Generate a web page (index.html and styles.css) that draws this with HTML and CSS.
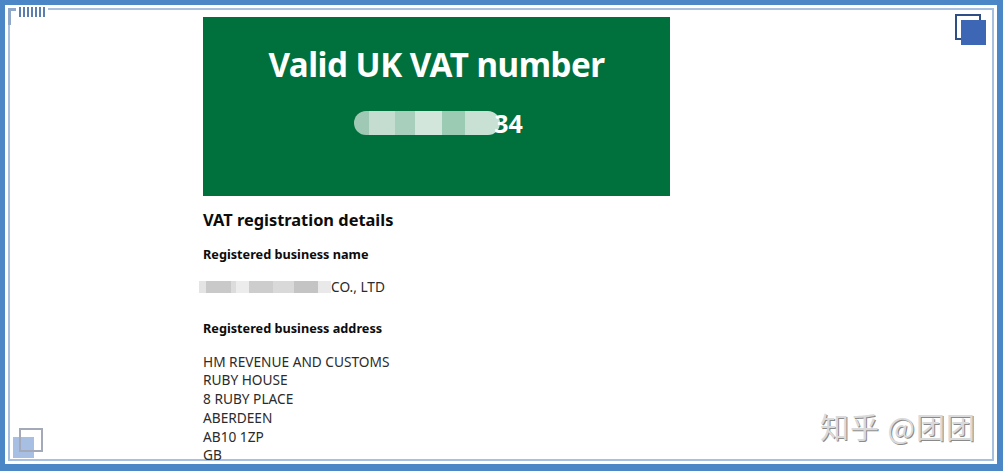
FILE: index.html
```html
<!DOCTYPE html>
<html lang="en">
<head>
  <meta charset="UTF-8">
  <title>Check a UK VAT number</title>
  <meta name="viewport" content="width=device-width, initial-scale=1">
  <link rel="stylesheet" href="styles.css">
</head>
<body>

<div class="frame">
  <div class="inner">

    <!-- decorations of the screenshot frame -->
    <div class="corner-tl"></div>
    <div class="hatch"><i></i><i></i><i></i><i></i><i></i><i></i><i></i></div>
    <div class="squares-tr"><span class="sq-line"></span><span class="sq-fill"></span></div>
    <div class="squares-bl"><span class="sq-fill"></span><span class="sq-line"></span></div>

    <main class="content">
      <div class="panel">
        <h1 class="panel-title">Valid UK VAT number</h1>
        <div class="panel-body"><span class="blur-pill"></span>34</div>
      </div>

      <h2 class="section-title">VAT registration details</h2>

      <h3 class="label">Registered business name</h3>
      <p class="value"><span class="blur-name"></span>CO., LTD</p>

      <h3 class="label">Registered business address</h3>
      <p class="value address">
        HM REVENUE AND CUSTOMS<br>
        RUBY HOUSE<br>
        8 RUBY PLACE<br>
        ABERDEEN<br>
        AB10 1ZP<br>
        GB
      </p>
    </main>

    <div class="watermark">知乎 @团团</div>
  </div>
</div>

</body>
</html>
```

FILE: styles.css
```css
body {
  margin: 0;
  font-family: 'Noto Sans', 'Liberation Sans', sans-serif;
  color: #0b0c0c;
  background: white;
}
.frame {
  width: 1003px;
  height: 471px;
  box-sizing: border-box;
  border: 5px solid #4b86c7;
  border-right-width: 6px;
  border-bottom-width: 7px;
  padding: 3px;
  background: white;
  overflow: hidden;
}
.inner {
  position: relative;
  height: 100%;
  box-sizing: border-box;
  border: 2px solid #a8c0df;
}
.content {
  padding: 7px 0 0 193px;
}
.panel {
  width: 467px;
  height: 179px;
  box-sizing: border-box;
  background: #00703c;
  color: white;
  text-align: center;
  padding-top: 26px;
}
.panel-title {
  margin: 0;
  font-size: 33.2px;
  font-weight: 700;
  line-height: 44px;
  letter-spacing: -0.5px;
}
.panel-body {
  margin-top: 21px;
  font-size: 25px;
  font-weight: 700;
  line-height: 30px;
  display: flex;
  justify-content: center;
  align-items: center;
  padding-left: 4px;
}
.blur-pill {
  display: inline-block;
  width: 146px;
  height: 24px;
  border-radius: 12px;
  margin-right: -6px;
  background:
    linear-gradient(90deg, #9fc9b4 0 10%, #c4ddd0 10% 28%, #a8cfbc 28% 42%, #d3e6dc 42% 60%, #9ccbb3 60% 76%, #c9e0d4 76% 100%);
}
.section-title {
  margin: 13px 0 0;
  font-size: 16.4px;
  font-weight: 700;
  line-height: 22px;
}
.label {
  margin: 14px 0 0;
  font-size: 12.7px;
  font-weight: 700;
  line-height: 18px;
}
.value {
  margin: 15px 0 0;
  font-size: 13.7px;
  line-height: 18.7px;
  color: #2b2b2b;
}
.value + .label {
  margin-top: 22px;
}
.address {
  margin-top: 16px;
}
.blur-name {
  display: inline-block;
  width: 132px;
  height: 12px;
  margin-left: -4px;
  vertical-align: -1px;
  background:
    linear-gradient(90deg, #e4e4e4 0 5%, #c9c9c9 5% 24%, #dcdcdc 24% 28%, #ececec 28% 38%, #cdcdcd 38% 56%, #d9d9d9 56% 72%, #c4c4c4 72% 90%, #e9e9e9 90% 100%);
}

/* frame ornaments */
.corner-tl {
  position: absolute;
  left: -2px;
  top: -2px;
  width: 6px;
  height: 14px;
  border-left: 3px solid #8fa8c9;
  border-top: 3px solid #8fa8c9;
}
.hatch {
  position: absolute;
  left: 6px;
  top: -3px;
  display: flex;
  gap: 2px;
  background: white;
  padding: 0 3px;
}
.hatch i {
  width: 2px;
  height: 10px;
  background: #5a7fb0;
}
.squares-tr {
  position: absolute;
  right: 6px;
  top: 4px;
  width: 31px;
  height: 31px;
}
.squares-tr .sq-line {
  position: absolute;
  left: 0;
  top: 0;
  width: 22px;
  height: 22px;
  border: 2px solid #2d4f86;
}
.squares-tr .sq-fill {
  position: absolute;
  right: 0;
  bottom: 0;
  width: 25px;
  height: 25px;
  background: #3d67b4;
}
.squares-bl {
  position: absolute;
  left: 3px;
  bottom: 1px;
  width: 30px;
  height: 30px;
}
.squares-bl .sq-fill {
  position: absolute;
  left: 0;
  bottom: 0;
  width: 21px;
  height: 21px;
  background: #a7bfe2;
}
.squares-bl .sq-line {
  position: absolute;
  right: 0;
  top: 0;
  width: 20px;
  height: 20px;
  border: 2px solid #a3a9b8;
}
.watermark {
  position: absolute;
  right: 16px;
  bottom: 12px;
  font-family: 'Noto Sans CJK SC', sans-serif;
  font-size: 29px;
  color: #dadada;
  letter-spacing: 1px;
  text-shadow: 1px 1px 0 #8a8a8a;
}
```
